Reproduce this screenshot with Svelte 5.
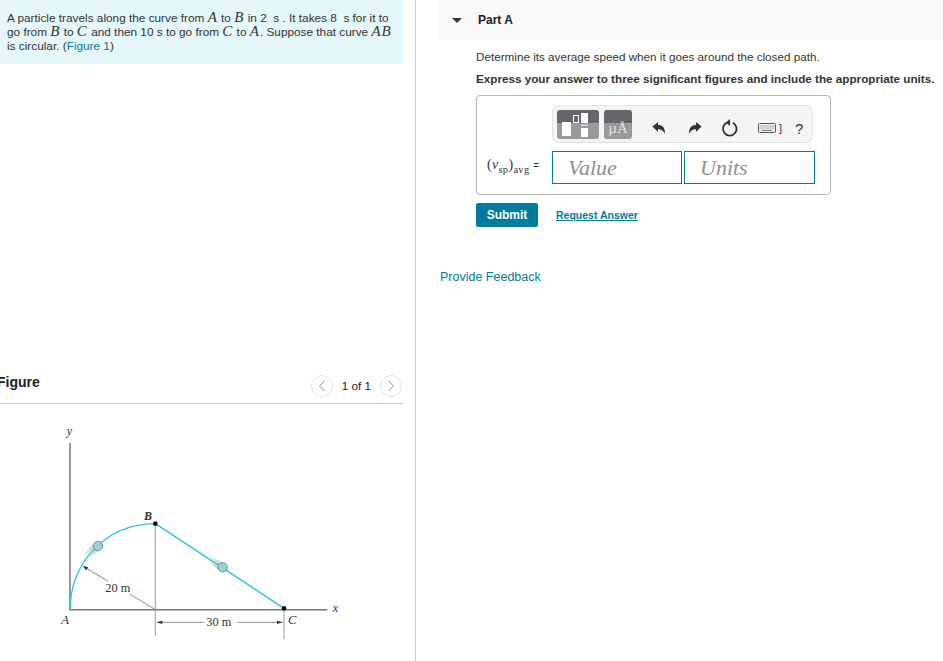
<script>
  const tools = ["undo", "redo", "reset"];
</script>

<div class="page">
  <section class="left">
    <div class="problem">
      A particle travels along the curve from <i class="m">A</i> to <i class="m">B</i> in 2 &nbsp;s . It takes 8 &nbsp;s for it to
      go from <i class="m">B</i> to <i class="m">C</i> and then 10 s to go from <i class="m">C</i> to <i class="m">A</i>. Suppose that curve <i class="m">AB</i>
      is circular. (<a href="#fig">Figure 1</a>)
    </div>

    <div class="fig-head">
      <h3>Figure</h3>
      <div class="pager">
        <span class="round"><svg width="8" height="12" viewBox="0 0 8 12"><path d="M6.5 1 1.5 6l5 5" fill="none" stroke="#bbb" stroke-width="1.2"/></svg></span>
        <span class="count">1 of 1</span>
        <span class="round"><svg width="8" height="12" viewBox="0 0 8 12"><path d="M1.5 1l5 5-5 5" fill="none" stroke="#bbb" stroke-width="1.2"/></svg></span>
      </div>
    </div>

    <svg class="diagram" width="310" height="220" viewBox="0 0 930 660" font-family="Liberation Serif, serif" fill="#333">
      <defs>
        <linearGradient id="trail1" x1="1" y1="0" x2="0" y2="1">
          <stop offset="0" stop-color="#8fb8b4"/><stop offset="1" stop-color="#8fb8b4" stop-opacity="0"/>
        </linearGradient>
        <linearGradient id="trail2" x1="1" y1="1" x2="0" y2="0">
          <stop offset="0" stop-color="#8fb8b4"/><stop offset="1" stop-color="#8fb8b4" stop-opacity="0"/>
        </linearGradient>
      </defs>
      <path d="M90 66V566H862" fill="none" stroke="#777" stroke-width="4.500"/>
      <path d="M346 308V645M732 562V655" stroke="#999" stroke-width="3" fill="none"/>
      <path d="M270 520 346 566" stroke="#777" stroke-width="2.500" fill="none"/>
      <path d="M203 480 132 438" stroke="#666" stroke-width="2.500" fill="none"/>
      <path d="M128 435l17 3-7 10z" fill="#333"/>
      <path d="M350 604H492M592 604H728" stroke="#777" stroke-width="2.500" fill="none"/>
      <path d="M350 604l17-5v10zM728 604l-17-5v10z" fill="#333"/>
      <path d="M90 566C92 430 190 310 346 308" fill="none" stroke="#27c4e4" stroke-width="4"/>
      <path d="M346 308 732 562" fill="none" stroke="#27c4e4" stroke-width="4"/>
      <path d="M132 396 166 362 184 382 148 412z" fill="url(#trail1)"/>
      <path d="M512 404 552 428 542 452 506 422z" fill="url(#trail2)"/>
      <circle cx="174" cy="375" r="14" fill="#9fd0d0" stroke="#6f9a9a" stroke-width="3"/>
      <circle cx="548" cy="439" r="14" fill="#9fd0d0" stroke="#6f9a9a" stroke-width="3"/>
      <circle cx="346" cy="308" r="7" fill="#111"/>
      <circle cx="732" cy="562" r="7" fill="#111"/>
      <text x="80" y="42" font-size="36" font-style="italic">y</text>
      <text x="312" y="296" font-size="36" font-style="italic" font-weight="bold">B</text>
      <text x="64" y="608" font-size="38" font-style="italic">A</text>
      <text x="744" y="610" font-size="38" font-style="italic">C</text>
      <text x="878" y="574" font-size="36" font-style="italic">x</text>
      <text x="196" y="513" font-size="37">20 m</text>
      <text x="499" y="615" font-size="37">30 m</text>
    </svg>
  </section>

  <section class="right">
    <div class="part-head">
      <span class="caret"></span>
      <h2>Part A</h2>
    </div>

    <div class="body">
      <p class="q">Determine its average speed when it goes around the closed path.</p>
      <p class="hint">Express your answer to three significant figures and include the appropriate units.</p>

      <div class="answer">
        <div class="toolbar">
          <span class="tile">
            <svg width="42" height="29" viewBox="0 0 42 29">
              <rect x="5" y="12" width="9" height="14" fill="#fff"/>
              <rect x="16.500" y="5.500" width="5" height="7" fill="none" stroke="#fff"/>
              <rect x="24" y="3" width="7" height="10" fill="#fff"/>
              <rect x="24" y="14.500" width="7" height="1.500" fill="#ddd"/>
              <rect x="24" y="18" width="7" height="9" fill="#fff"/>
            </svg>
          </span>
          <span class="tile small"><span class="mu">µÅ</span></span>
          <div class="icons">
            {#each tools as t}
              <span class="ic {t}">
                {#if t === "undo"}
                  <svg width="16" height="16" viewBox="0 0 16 16"><path d="M1.500 6.500 7 2v3c4.500 0 7 2.500 7 9-1.300-3.300-3.300-4.800-7-4.800V12z" fill="#333"/></svg>
                {:else if t === "redo"}
                  <svg width="16" height="16" viewBox="0 0 16 16"><path d="M14.500 6.500 9 2v3c-4.500 0-7 2.500-7 9 1.300-3.300 3.300-4.800 7-4.800V12z" fill="#333"/></svg>
                {:else}
                  <svg width="18" height="18" viewBox="0 0 18 18"><path d="M6 3.600A6.800 6.800 0 1 0 12 3.800" fill="none" stroke="#333" stroke-width="1.800"/><path d="M9 0V7L4.800 3.600z" fill="#333"/></svg>
                {/if}
              </span>
            {/each}
            <span class="kbd">
              <svg width="18" height="10" viewBox="0 0 18 10"><rect x=".5" y=".5" width="17" height="9" rx="1" fill="#eee" stroke="#555"/><path d="M2.500 3h13M2.500 5h13" stroke="#777" stroke-dasharray="1 1"/><path d="M4 7.400h10" stroke="#777"/></svg>
              <span class="br">]</span>
            </span>
            <span class="help">?</span>
          </div>
        </div>

        <div class="row">
          <span class="label">(<i>v</i><sub>sp</sub>)<sub>avg</sub> <span class="eq">=</span></span>
          <input class="box value" placeholder="Value" />
          <input class="box units" placeholder="Units" />
        </div>
      </div>

      <div class="actions">
        <button>Submit</button>
        <a class="req" href="#req">Request Answer</a>
      </div>
    </div>

    <a class="feedback" href="#fb">Provide Feedback</a>
  </section>
</div>

<style>
  :global(body) {
    margin: 0;
    background: #fff;
  }
  .page {
    display: flex;
    width: 943px;
    height: 661px;
    overflow: hidden;
    font-family: "Liberation Sans", Arial, sans-serif;
    font-size: 11.700px;
    color: #333;
  }
  a {
    color: #007c9c;
    text-decoration: none;
  }
  .left {
    width: 415px;
    flex: none;
    border-right: 1px solid #ccc;
  }
  .problem {
    width: 389px;
    height: 53px;
    padding: 11px 7px 0 7px;
    background: #e5f7fa;
    font-size: 11.800px;
    line-height: 14px;
  }
  .m {
    font-family: "Liberation Serif", serif;
    font-size: 15px;
    line-height: 10px;
    letter-spacing: 1px;
  }
  .fig-head {
    display: flex;
    align-items: center;
    justify-content: space-between;
    width: 403px;
    height: 38px;
    margin-top: 301px;
    border-bottom: 1px solid #ccc;
  }
  .fig-head h3 {
    margin: 0 0 4px -3px;
    font-size: 14px;
    font-weight: bold;
    color: #222;
  }
  .pager {
    display: flex;
    align-items: center;
    gap: 9px;
    margin: 3px 1px 0 0;
  }
  .round {
    display: flex;
    align-items: center;
    justify-content: center;
    width: 20px;
    height: 20px;
    border: 1px solid #e4e4e4;
    border-radius: 50%;
  }
  .count {
    color: #222;
  }
  .diagram {
    display: block;
    margin: 17px 0 0 40px;
  }
  .right {
    flex: 1;
    padding-left: 23px;
    min-width: 0;
  }
  .part-head {
    display: flex;
    align-items: center;
    height: 40px;
    background: #f9f9f9;
  }
  .caret {
    width: 0;
    height: 0;
    margin-left: 13px;
    border-left: 5px solid transparent;
    border-right: 5px solid transparent;
    border-top: 5px solid #333;
  }
  .part-head h2 {
    margin: 0 0 0 16px;
    font-size: 12px;
    font-weight: bold;
    color: #222;
  }
  .body {
    padding-left: 37px;
  }
  .q {
    margin: 10px 0 0;
    line-height: 14px;
  }
  .hint {
    margin: 8px 0 0;
    line-height: 14px;
    font-size: 11.700px;
    font-weight: bold;
    white-space: nowrap;
  }
  .answer {
    width: 353px;
    height: 98px;
    margin-top: 9px;
    border: 1px solid #b5b5b5;
    border-radius: 4px;
  }
  .toolbar {
    display: flex;
    align-items: center;
    gap: 5px;
    width: 261px;
    height: 38px;
    margin: 9px 0 0 75px;
    padding-left: 4px;
    box-sizing: border-box;
    background: #f4f4f4;
    border: 1px solid #e2e2e2;
    border-radius: 6px;
  }
  .tile {
    display: flex;
    flex: none;
    align-items: center;
    justify-content: center;
    width: 42px;
    height: 29px;
    border-radius: 3px;
    background: linear-gradient(#66666a 0 45%, #99999e 45% 100%);
  }
  .tile.small {
    width: 28px;
  }
  .mu {
    margin-top: 8px;
    font-family: "Liberation Serif", serif;
    font-size: 15px;
    color: #e0e0e0;
  }
  .icons {
    display: flex;
    flex: none;
    align-items: center;
    margin: 8px 0 0 4px;
  }
  .ic {
    display: flex;
    justify-content: center;
    width: 36px;
  }
  .ic.reset {
    width: 34px;
  }
  .ic svg {
    display: block;
  }
  .kbd {
    display: flex;
    align-items: center;
    gap: 3px;
    margin-left: 11px;
  }
  .br {
    font-size: 11px;
    line-height: 11px;
  }
  .help {
    margin-left: 13px;
    font-size: 15px;
  }
  .row {
    display: flex;
    align-items: center;
    margin-top: 8px;
  }
  .label {
    width: 75px;
    margin-bottom: 6px;
    padding-left: 10px;
    box-sizing: border-box;
    font-family: "Liberation Serif", serif;
    font-size: 14px;
    letter-spacing: 0.3px;
    white-space: nowrap;
  }
  .label sub {
    font-size: 10.500px;
    line-height: 0;
  }
  .eq {
    font-family: "Liberation Sans", sans-serif;
    font-size: 10px;
  }
  .box {
    height: 33px;
    box-sizing: border-box;
    padding: 0 0 0 15px;
    border: 1px solid #007c9c;
    border-radius: 0;
    background: #fff;
    font-family: "Liberation Serif", serif;
    font-size: 22px;
    font-style: italic;
    outline: none;
  }
  .box::placeholder {
    color: #8f8f8f;
    opacity: 1;
  }
  .value {
    width: 130px;
  }
  .units {
    width: 131px;
    margin-left: 2px;
  }
  .actions {
    display: flex;
    align-items: center;
    gap: 18px;
    margin-top: 8px;
  }
  button {
    width: 62px;
    height: 24px;
    padding: 0;
    border: none;
    border-radius: 2px;
    background: #007c9c;
    color: #fff;
    font-family: "Liberation Sans", sans-serif;
    font-size: 12px;
    font-weight: bold;
  }
  .req {
    font-size: 10.500px;
    font-weight: bold;
    text-decoration: underline;
  }
  .feedback {
    display: block;
    margin: 43px 0 0 1px;
    font-size: 12.500px;
  }
</style>
